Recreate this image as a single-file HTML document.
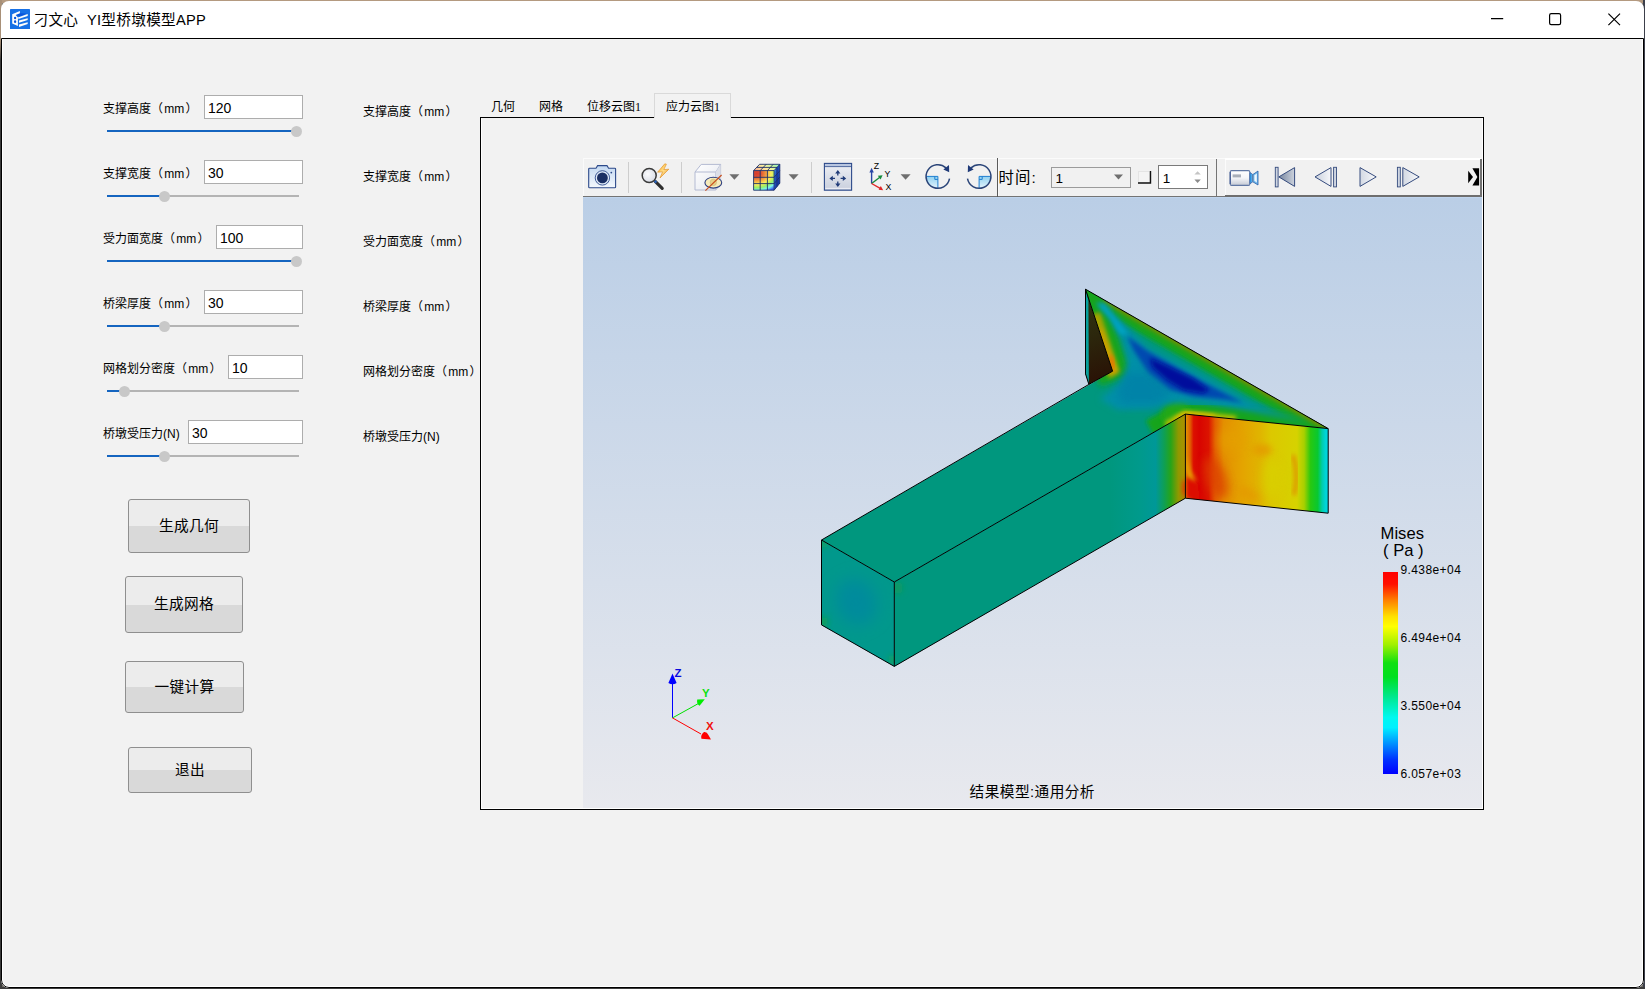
<!DOCTYPE html>
<html lang="zh-CN">
<head>
<meta charset="utf-8">
<title>YI型桥墩模型APP</title>
<style>
html,body{margin:0;padding:0;}
body{width:1645px;height:989px;overflow:hidden;position:relative;background:#6e6a64;font-family:"Liberation Sans","Noto Sans CJK SC",sans-serif;color:#000;}
.abs{position:absolute;}
#desk-top{left:0;top:0;width:1645px;height:3px;background:#b49a80;}
#desk-left{left:0;top:0;width:2px;height:989px;background:linear-gradient(#a89078 0,#a89078 40px,#3a3a3a 60px,#3a3a3a 100%);}
#desk-right{left:1643px;top:0;width:2px;height:989px;background:#3c3f4a;}
#desk-bottom{left:0;top:987px;width:1645px;height:2px;background:#3c3c3c;}
#win{left:1px;top:1px;width:1643px;height:987px;background:#fff;border-radius:8px;overflow:hidden;}
#client{left:0;top:37px;width:1641px;height:948px;border:1px solid #000;background:#f2f2f2;box-shadow:inset 1px 0 0 #fff, inset -1px -1px 0 #fff;border-radius:0 0 8px 8px;}
#title{left:32.5px;top:9px;font-size:14.67px;line-height:20px;white-space:pre;letter-spacing:0.27px;}
.lbl{font-size:12px;line-height:18px;white-space:nowrap;color:#000;}
.inp{background:#fff;border:1px solid #adadad;box-sizing:border-box;height:24px;font-size:14px;line-height:24px;padding-left:3px;}
.lbl i{font-style:normal;margin:0 1.1px 0 1.3px;}
.trk{height:2px;background:#b4b4b4;}
.trk b{display:block;height:2px;background:#1565c0;}
.knob{width:11px;height:11px;border-radius:50%;background:#c8c8c8;}
.btn{box-sizing:border-box;border:1px solid #8f8f8f;border-radius:3px;background:linear-gradient(#ececec 0,#ececec 50%,#d9d9d9 50%,#d9d9d9 100%);font-size:14.67px;text-align:center;letter-spacing:0.3px;}
.sf{font-family:"Liberation Serif",serif;}
.tab{font-size:12px;line-height:16px;white-space:nowrap;}
</style>
</head>
<body>
<div class="abs" id="desk-top"></div><div class="abs" id="desk-left"></div><div class="abs" id="desk-right"></div><div class="abs" id="desk-bottom"></div>
<div class="abs" id="win">
<!-- TITLEBAR -->
<div class="abs" id="title">刁文心  YI型桥墩模型APP</div>
<svg class="abs" style="left:9px;top:8px" width="20" height="20" viewBox="10 9 20 20"><rect x="10" y="9" width="20" height="20" rx="0.6" fill="#1771e6"/>
<path d="M15.3 14.9 L19.9 13.2 L26.9 13.6 L20.2 16.4 Z" fill="#0a55dc"/>
<path d="M12.2 14.3 L19.9 11.1 L19.9 13.2 L15.6 14.9 L17.9 17.4 L27.7 13.9 L27.7 16.1 L19.2 18.8 L17.9 18.6 L17.9 25.9 L12.2 23.4 Z" fill="#fdfdfb"/>
<path d="M19 20.5 L27.7 18.2 L27.7 20.1 L19 22.8 Z M19 24.5 L27.7 22.2 L27.7 24.1 L19 26.9 Z" fill="#fdfdfb"/>
<ellipse cx="15.1" cy="17.9" rx="1.15" ry="1.25" fill="#0a55dc"/><ellipse cx="15.1" cy="21.7" rx="1.15" ry="1.35" fill="#0a55dc"/>
</svg>
<svg class="abs" style="left:1480px;top:5px" width="150" height="28" viewBox="0 0 150 28" fill="none" stroke="#000" stroke-width="1.2"><path d="M10 12.7 H22.2"/><rect x="68.6" y="7.6" width="11" height="11" rx="1.6"/><path d="M127.4 7.6 L139 19.2 M139 7.6 L127.4 19.2"/></svg>
<div class="abs" id="client"></div>
</div>
<!--LEFT-->
<div class="abs lbl" style="left:103px;top:100px">支撑高度（<i>mm</i>）</div>
<div class="abs inp" style="left:204px;top:95px;width:99px">120</div>
<div class="abs trk" style="left:107px;top:130px;width:192px"><b style="width:189px"></b></div>
<div class="abs knob" style="left:291px;top:126px"></div>
<div class="abs lbl" style="left:363px;top:103px">支撑高度（<i>mm</i>）</div>
<div class="abs lbl" style="left:103px;top:165px">支撑宽度（<i>mm</i>）</div>
<div class="abs inp" style="left:204px;top:160px;width:99px">30</div>
<div class="abs trk" style="left:107px;top:195px;width:192px"><b style="width:57px"></b></div>
<div class="abs knob" style="left:159px;top:191px"></div>
<div class="abs lbl" style="left:363px;top:168px">支撑宽度（<i>mm</i>）</div>
<div class="abs lbl" style="left:103px;top:230px">受力面宽度（<i>mm</i>）</div>
<div class="abs inp" style="left:216px;top:225px;width:87px">100</div>
<div class="abs trk" style="left:107px;top:260px;width:192px"><b style="width:189px"></b></div>
<div class="abs knob" style="left:291px;top:256px"></div>
<div class="abs lbl" style="left:363px;top:233px">受力面宽度（<i>mm</i>）</div>
<div class="abs lbl" style="left:103px;top:295px">桥梁厚度（<i>mm</i>）</div>
<div class="abs inp" style="left:204px;top:290px;width:99px">30</div>
<div class="abs trk" style="left:107px;top:325px;width:192px"><b style="width:57px"></b></div>
<div class="abs knob" style="left:159px;top:321px"></div>
<div class="abs lbl" style="left:363px;top:298px">桥梁厚度（<i>mm</i>）</div>
<div class="abs lbl" style="left:103px;top:360px">网格划分密度（<i>mm</i>）</div>
<div class="abs inp" style="left:228px;top:355px;width:75px">10</div>
<div class="abs trk" style="left:107px;top:390px;width:192px"><b style="width:17px"></b></div>
<div class="abs knob" style="left:119px;top:386px"></div>
<div class="abs lbl" style="left:363px;top:363px">网格划分密度（<i>mm</i>）</div>
<div class="abs lbl" style="left:103px;top:425px">桥墩受压力(N)</div>
<div class="abs inp" style="left:188px;top:420px;width:115px">30</div>
<div class="abs trk" style="left:107px;top:455px;width:192px"><b style="width:57px"></b></div>
<div class="abs knob" style="left:159px;top:451px"></div>
<div class="abs lbl" style="left:363px;top:428px">桥墩受压力(N)</div>
<div class="abs btn" style="left:128px;top:499px;width:122px;height:54px;line-height:52px">生成几何</div>
<div class="abs btn" style="left:125px;top:576px;width:118px;height:57px;line-height:55px">生成网格</div>
<div class="abs btn" style="left:125px;top:661px;width:119px;height:52px;line-height:50px">一键计算</div>
<div class="abs btn" style="left:128px;top:747px;width:124px;height:46px;line-height:44px">退出</div>
<div class="abs" style="left:654px;top:93px;width:77px;height:25px;box-sizing:border-box;border:1px solid #d9d9d9;border-bottom:none;background:#f2f2f2;z-index:3"></div>
<div class="abs tab" style="left:491px;top:99px;z-index:4">几何</div>
<div class="abs tab" style="left:539px;top:99px;z-index:4">网格</div>
<div class="abs tab" style="left:587px;top:99px;z-index:4">位移云图<span class="sf">1</span></div>
<div class="abs tab" style="left:666px;top:99px;z-index:4">应力云图<span class="sf">1</span></div>
<div class="abs" id="pane" style="left:480px;top:117px;width:1002px;height:691px;border:1px solid #000;box-shadow:inset 1px 0 0 #fff,inset 0 -1px 0 #fff,inset -1px 0 0 #fff;background:#f2f2f2;z-index:2"></div>
<svg class="abs" id="tb" style="left:583px;top:157px;z-index:5" width="900" height="40" viewBox="583 157 900 40" font-family="'Liberation Sans','Noto Sans CJK SC',sans-serif">
<defs>
<linearGradient id="gCam" x1="0" y1="0" x2="0" y2="1"><stop offset="0" stop-color="#c3d8f1"/><stop offset="1" stop-color="#f4f8fd"/></linearGradient>
<radialGradient id="gLens" cx="0.4" cy="0.4" r="0.7"><stop offset="0" stop-color="#fafbfd"/><stop offset="1" stop-color="#d6dae4"/></radialGradient>
<linearGradient id="gBolt" x1="0" y1="0" x2="1" y2="1"><stop offset="0" stop-color="#f7a21a"/><stop offset="0.5" stop-color="#ffe08a"/><stop offset="1" stop-color="#e07a10"/></linearGradient>
<linearGradient id="gCube" x1="0" y1="0" x2="1" y2="1"><stop offset="0" stop-color="#ffffff"/><stop offset="1" stop-color="#e2e5ee"/></linearGradient>
<linearGradient id="gFit" x1="0" y1="0" x2="0" y2="1"><stop offset="0" stop-color="#eef0f5"/><stop offset="1" stop-color="#c9cfdd"/></linearGradient>
<linearGradient id="gQ" x1="0" y1="0" x2="0" y2="1"><stop offset="0" stop-color="#8fd0f0"/><stop offset="1" stop-color="#e4f4fc"/></linearGradient>
<linearGradient id="gVid" x1="0" y1="0" x2="0" y2="1"><stop offset="0" stop-color="#ffffff"/><stop offset="0.5" stop-color="#f4f5f8"/><stop offset="1" stop-color="#c4c9d4"/></linearGradient>
<linearGradient id="gTriD" x1="0" y1="0" x2="1" y2="0"><stop offset="0" stop-color="#76859f"/><stop offset="1" stop-color="#cdd3dd"/></linearGradient>
<linearGradient id="gTriL" x1="0" y1="0" x2="1" y2="0"><stop offset="0" stop-color="#c9d0dc"/><stop offset="1" stop-color="#f6f7fa"/></linearGradient>
<linearGradient id="gTriR" x1="0" y1="0" x2="1" y2="0"><stop offset="0" stop-color="#d3d9e3"/><stop offset="1" stop-color="#f8f9fb"/></linearGradient>
<radialGradient id="rbF" gradientUnits="userSpaceOnUse" cx="756.5" cy="173.5" r="21.5" gradientTransform="translate(756.5 173.5) scale(1.35 1) translate(-756.5 -173.5)"><stop offset="0" stop-color="#d63c30"/><stop offset="0.14" stop-color="#dc4a32"/><stop offset="0.34" stop-color="#f4a040"/><stop offset="0.5" stop-color="#fcec5c"/><stop offset="0.66" stop-color="#98f068"/><stop offset="0.78" stop-color="#78f4ec"/><stop offset="0.9" stop-color="#3c64f4"/><stop offset="1" stop-color="#2848e0"/></radialGradient>
<linearGradient id="rbT" x1="0" y1="0.6" x2="1" y2="0.2"><stop offset="0" stop-color="#f8b890"/><stop offset="0.45" stop-color="#fcf0a0"/><stop offset="0.75" stop-color="#c8f8a0"/><stop offset="1" stop-color="#90f0c0"/></linearGradient>
<linearGradient id="rbS" x1="0" y1="0" x2="1" y2="1"><stop offset="0" stop-color="#48c8e8"/><stop offset="0.35" stop-color="#2050c8"/><stop offset="1" stop-color="#0c2890"/></linearGradient>
</defs>
<!-- bg -->
<rect x="583" y="158" width="898" height="38" fill="#f1f1f1"/><rect x="583" y="158" width="1" height="38" fill="#fafafa"/>
<rect x="584" y="158" width="641" height="1" fill="#fbfbfb"/>
<rect x="1225" y="158" width="256" height="2" fill="#ffffff"/>
<rect x="583" y="196" width="634" height="1" fill="#747474"/>
<rect x="1217" y="196" width="8" height="1" fill="#747474"/><rect x="1225" y="160" width="1" height="35" fill="#fbfbfb"/>
<rect x="1225" y="195" width="257" height="2" fill="#6e6e6e"/>
<rect x="1480" y="159" width="2" height="38" fill="#727272"/>

<!-- camera -->
<path d="M589.5 168.2 H596 L597.6 165.6 H607 L608.6 168.2 H614.8 Q615.6 168.2 615.6 169 V187 Q615.6 187.8 614.8 187.8 H589.5 Q588.7 187.8 588.7 187 V169 Q588.7 168.2 589.5 168.2 Z" fill="url(#gCam)" stroke="#2d4a8a" stroke-width="1.1"/>
<circle cx="602.4" cy="177.9" r="7.2" fill="#dfe9f7" stroke="#2d4a8a" stroke-width="0.9"/>
<circle cx="602.4" cy="177.9" r="5.4" fill="#1b2f63"/>
<circle cx="611.3" cy="172.6" r="0.9" fill="#2d4a8a"/>
<!-- separators -->
<rect x="628" y="162" width="1" height="31" fill="#cdcdcd"/>
<rect x="681" y="162" width="1" height="31" fill="#cdcdcd"/>
<rect x="811" y="162" width="1" height="31" fill="#cdcdcd"/>
<!-- magnifier -->
<path d="M655.2 181.4 L662.2 188.4" stroke="#2f2f2f" stroke-width="3.2" stroke-linecap="round"/>
<path d="M654.2 180.4 L656.4 182.6" stroke="#2a62b8" stroke-width="2.2"/>
<circle cx="649.2" cy="175.5" r="7" fill="url(#gLens)" stroke="#3a3a3a" stroke-width="1.5"/>
<path d="M664.8 163.8 L657.6 172.2 L662.6 171.8 L660 178 L668.8 169.2 L663.8 169.6 L666.4 164.2 Z" fill="url(#gBolt)" stroke="#e08a18" stroke-width="0.6"/>
<!-- cube + eye -->
<path d="M695 172 L701.2 164.4 H720.6 V184.2 L715.8 190 H695 Z" fill="url(#gCube)" stroke="#b3bad2" stroke-width="1"/>
<path d="M695 172 H715.8 V190 M715.8 172 L720.6 164.4" fill="none" stroke="#b3bad2" stroke-width="1"/>
<path d="M715.8 172 L720.6 164.4 V184.2 L715.8 190 Z" fill="#dcdfe8"/>
<ellipse cx="713.3" cy="182.7" rx="8.4" ry="5.4" fill="#f6ebbb" stroke="#2d3f80" stroke-width="1.1"/>
<circle cx="713.3" cy="182.4" r="3.2" fill="#e8d38a" stroke="#c9b878" stroke-width="0.6"/>
<path d="M705.4 190.6 L721.6 175" stroke="#c8501e" stroke-width="1.2"/>
<!-- dropdown arrows -->
<path d="M729.4 174.2 H739.4 L734.4 179.8 Z" fill="#6f6f6f"/>
<path d="M788.6 174.2 H798.6 L793.6 179.8 Z" fill="#6f6f6f"/>
<path d="M900.6 174.2 H910.6 L905.6 179.8 Z" fill="#6f6f6f"/>
<!-- rainbow cube -->
<path d="M753.6 170.6 L759.6 164.3 H779.8 L774.1 170.6 Z" fill="url(#rbT)"/>
<path d="M774.1 170.6 L779.8 164.3 V183.2 L774.1 190.2 Z" fill="url(#rbS)"/>
<rect x="753.6" y="170.6" width="20.5" height="19.6" fill="url(#rbF)"/>
<path d="M753.6 170.6 H774.1 V190.2 H753.6 Z M753.6 170.6 L759.6 164.3 H779.8 V183.2 L774.1 190.2 M774.1 170.6 L779.8 164.3 M760.2 170.6 V190.2 M767.4 170.6 V190.2 M753.6 177.3 H774.1 M753.6 183.6 H774.1 M760.2 170.6 L766.2 164.3 M767.4 170.6 L773.2 164.3 M756.6 167.4 H777 M777 167.4 V186.6 M774.1 177.3 L779.8 170.8 M774.1 183.6 L779.8 177" fill="none" stroke="#1c2f6a" stroke-width="0.9"/>
<!-- fit view -->
<rect x="824.4" y="163.4" width="27.2" height="26.8" fill="url(#gFit)" stroke="#2d4a8a" stroke-width="1.1"/>
<rect x="825" y="164" width="26" height="2.4" fill="#b9c6e0"/>
<path d="M824.4 166.6 H851.6" stroke="#2d4a8a" stroke-width="0.8"/>
<path d="M825.4 188.4 H850.6" stroke="#eef0f6" stroke-width="1"/>
<g stroke="#1f3a78" stroke-width="1.3" fill="#1f3a78">
<path d="M837.8 171.5 V175.6 M837.8 181.4 V185.5 M831 178.4 H835 M840.6 178.4 H844.8" fill="none"/>
<path d="M837.8 170 L840.4 173.4 H835.2 Z M837.8 187 L840.4 183.6 H835.2 Z M829.4 178.4 L832.8 175.8 V181 Z M846.2 178.4 L842.8 175.8 V181 Z" stroke="none"/>
</g>
<!-- axes icon -->
<path d="M871.6 183.5 V170.5" stroke="#2845a5" stroke-width="1.4"/><path d="M871.6 167.8 L873.8 172.4 H869.4 Z" fill="#2845a5"/>
<path d="M871.6 183.5 L880.2 177" stroke="#168a3c" stroke-width="1.4"/><path d="M882.6 175.2 L880.6 179.4 L877.8 175.8 Z" fill="#168a3c"/>
<path d="M871.6 183.5 L880.6 188.6" stroke="#e02828" stroke-width="1.4"/><path d="M883.2 190.2 L878.6 189.8 L880.8 186 Z" fill="#e02828"/>
<text x="873.8" y="169.4" font-size="8.8" fill="#000">Z</text>
<text x="884.6" y="177.4" font-size="8.8" fill="#000">Y</text>
<text x="885.4" y="189.8" font-size="8.8" fill="#000">X</text>
<!-- rotate cw -->
<path d="M926.2 176.4 H937.9 V188.2 A11.8 11.8 0 0 1 926.2 176.4 Z" fill="url(#gQ)"/>
<path d="M926.2 176.4 H937.9 V188.2 M934.8 176.4 V179.4 H937.9" fill="none" stroke="#1f7fd0" stroke-width="1"/>
<path d="M949.5 178.6 A11.8 11.8 0 1 1 946 167.9" fill="none" stroke="#2a4478" stroke-width="1.5"/>
<path d="M943.4 169.6 L949 165 L949.2 172.2 Z" fill="#1f3a78"/>
<!-- rotate ccw -->
<path d="M990.8 176.4 H979.1 V188.2 A11.8 11.8 0 0 0 990.8 176.4 Z" fill="url(#gQ)"/>
<path d="M990.8 176.4 H979.1 V188.2 M982.2 176.4 V179.4 H979.1" fill="none" stroke="#1f7fd0" stroke-width="1"/>
<path d="M967.5 178.6 A11.8 11.8 0 1 0 971 167.9" fill="none" stroke="#2a4478" stroke-width="1.5"/>
<path d="M973.6 169.6 L968 165 L967.8 172.2 Z" fill="#1f3a78"/>
<!-- divider -->
<rect x="997" y="158" width="1" height="39" fill="#5a5a5a"/>
<rect x="998" y="158" width="1" height="38" fill="#fafafa"/>
<text x="998.6" y="183" font-size="15.4" fill="#000" letter-spacing="1">时间:</text>
<!-- combobox -->
<rect x="1051.5" y="167.5" width="79" height="20" fill="#f1f1f1" stroke="#9b9b9b" stroke-width="1"/>
<text x="1055.6" y="182.9" font-size="13.5" fill="#000">1</text>
<path d="M1114 174.6 H1123 L1118.5 179.6 Z" fill="#6f6f6f"/>
<!-- small raised square -->
<rect x="1138.5" y="171.5" width="11" height="11" fill="#f4f4f4" stroke="#e4e4e4" stroke-width="1"/>
<path d="M1138 183 H1150.5 V171" fill="none" stroke="#111" stroke-width="1.4"/>
<!-- spinbox -->
<rect x="1158.5" y="165.5" width="49" height="23" fill="#fff" stroke="#7a7a7a" stroke-width="1"/>
<text x="1162.8" y="182.9" font-size="13.5" fill="#000">1</text>
<path d="M1194.4 174.6 L1197.6 171.2 L1200.8 174.6 Z" fill="#c4c4c4"/>
<path d="M1194.4 179.4 L1197.6 182.9 L1200.8 179.4 Z" fill="#8a8a8a"/>
<!-- divider 2 -->
<rect x="1216" y="159" width="1" height="38" fill="#747474"/>
<!-- video camera -->
<rect x="1230.2" y="170.6" width="19.6" height="14.8" rx="1.4" fill="url(#gVid)" stroke="#6178a4" stroke-width="1.1"/>
<path d="M1230.2 172 V184" stroke="#3c5690" stroke-width="1.1"/>
<rect x="1232.6" y="174.4" width="8.4" height="3" fill="#a9afb9"/>
<path d="M1250 172.6 L1252.8 174.6 L1258 171 V185 L1252.8 181.8 L1250 183.6 Z" fill="#6fb8ec" stroke="#2a5ea8" stroke-width="0.8"/>
<path d="M1250.8 174.2 V182" stroke="#2390e0" stroke-width="1.2"/>
<path d="M1252.8 175 V181.4" stroke="#5b6f98" stroke-width="1.1"/>
<path d="M1254.4 175.2 L1256.8 173.6 V182.4 L1254.4 180.8 Z" fill="#f2f9ff"/>
<!-- first -->
<rect x="1275.3" y="167.3" width="2.8" height="19.6" fill="#cfd6e2" stroke="#364c7e" stroke-width="0.9"/>
<path d="M1278.8 176.9 L1294.6 167.6 V186.4 Z" fill="url(#gTriD)" stroke="#364c7e" stroke-width="1"/>
<!-- prev -->
<path d="M1315 176.9 L1331 167.6 V186.4 Z" fill="url(#gTriL)" stroke="#364c7e" stroke-width="1"/>
<rect x="1333.6" y="167.3" width="2.9" height="19.6" fill="#cfd6e2" stroke="#364c7e" stroke-width="0.9"/>
<!-- play -->
<path d="M1376.2 176.9 L1360 167.6 V186.4 Z" fill="url(#gTriR)" stroke="#364c7e" stroke-width="1"/>
<!-- next -->
<rect x="1397.4" y="167.3" width="2.9" height="19.6" fill="#cfd6e2" stroke="#364c7e" stroke-width="0.9"/>
<path d="M1419.2 176.9 L1402.8 167.6 V186.4 Z" fill="url(#gTriR)" stroke="#364c7e" stroke-width="1"/>
<!-- extension -->
<path d="M1468.2 170.8 L1473 177 L1468.2 183.2 Z" fill="#000"/>
<path d="M1472.4 168.2 H1479.1 V185.6 H1472.4 L1477.4 177 Z" fill="#000"/>
</svg>
<div class="abs" id="vp" style="left:583px;top:197px;width:899px;height:611px;background:linear-gradient(#c0d5ee 0,#c0d5ee 1px,#bacee6 1px,#e8e9ee 100%);z-index:5;overflow:hidden">
<svg class="abs" style="left:0;top:0" width="899" height="611" viewBox="583 197 899 611" font-family="'Liberation Sans','Noto Sans CJK SC',sans-serif">
<defs>
<filter id="b2" x="-50%" y="-50%" width="200%" height="200%"><feGaussianBlur stdDeviation="2"/></filter>
<filter id="b3" x="-50%" y="-50%" width="200%" height="200%"><feGaussianBlur stdDeviation="3"/></filter>
<filter id="b5" x="-50%" y="-50%" width="200%" height="200%"><feGaussianBlur stdDeviation="5"/></filter>
<filter id="b8" x="-50%" y="-50%" width="200%" height="200%"><feGaussianBlur stdDeviation="8"/></filter>
<clipPath id="cTop"><path d="M821.5 540 L894.3 582 L1185.4 414.1 L1328.2 428.6 L1085.5 289.2 L1112.6 371.2 Z"/></clipPath>
<clipPath id="cSide"><path d="M894.3 582 L894.3 666.4 L1185.4 498.2 L1185.4 414.1 Z"/></clipPath>
<clipPath id="cFront"><path d="M821.5 540 L821.5 624.9 L894.3 666.4 L894.3 582 Z"/></clipPath>
<clipPath id="cRed"><path d="M1185.4 414.1 L1328.2 428.6 L1328.2 513.2 L1185.4 498.2 Z"/></clipPath>
<linearGradient id="gRed" gradientUnits="userSpaceOnUse" x1="1185" y1="0" x2="1328.5" y2="0">
<stop offset="0" stop-color="#e0a000"/><stop offset="0.035" stop-color="#e06000"/><stop offset="0.06" stop-color="#dc1000"/><stop offset="0.1" stop-color="#d80400"/><stop offset="0.165" stop-color="#dc1400"/><stop offset="0.21" stop-color="#e46000"/><stop offset="0.27" stop-color="#e49000"/><stop offset="0.4" stop-color="#e4a400"/><stop offset="0.52" stop-color="#e0b400"/><stop offset="0.6" stop-color="#dcc800"/><stop offset="0.78" stop-color="#d6d200"/><stop offset="0.83" stop-color="#a8d000"/><stop offset="0.875" stop-color="#28c810"/><stop offset="0.925" stop-color="#08c830"/><stop offset="0.955" stop-color="#00ccaa"/><stop offset="0.98" stop-color="#00d4d8"/><stop offset="1" stop-color="#00d8e0"/></linearGradient>
<linearGradient id="gSide" gradientUnits="userSpaceOnUse" x1="1110" y1="0" x2="1186" y2="0">
<stop offset="0" stop-color="#00977e"/><stop offset="0.4" stop-color="#009a8c"/><stop offset="0.6" stop-color="#009898"/><stop offset="0.72" stop-color="#10a050"/><stop offset="0.8" stop-color="#28a418"/><stop offset="0.9" stop-color="#909800"/><stop offset="1" stop-color="#b09000"/></linearGradient>
<linearGradient id="gDark" gradientUnits="userSpaceOnUse" x1="1086" y1="300" x2="1112" y2="372"><stop offset="0" stop-color="#303410"/><stop offset="0.5" stop-color="#2c260c"/><stop offset="1" stop-color="#2a1406"/></linearGradient>
</defs>
<!--MODEL-->
<g stroke-linejoin="round">
<!-- front -->
<path d="M821.5 540 L821.5 624.9 L894.3 666.4 L894.3 582 Z" fill="#01988c"/>
<g clip-path="url(#cFront)"><ellipse cx="856" cy="602" rx="20" ry="24" fill="#008b9c" filter="url(#b8)" transform="rotate(-25 856 602)"/>
<circle cx="823" cy="622" r="5" fill="#10a050" filter="url(#b3)"/><circle cx="823" cy="543" r="5" fill="#10a060" filter="url(#b3)"/><circle cx="893" cy="660" r="5" fill="#10a060" filter="url(#b3)"/></g>
<!-- side -->
<path d="M894.3 582 L894.3 666.4 L1185.4 498.2 L1185.4 414.1 Z" fill="url(#gSide)"/>
<g clip-path="url(#cSide)"><circle cx="897" cy="588" r="6" fill="#109a60" filter="url(#b3)"/><ellipse cx="1185" cy="488" rx="3" ry="9" fill="#d84000" filter="url(#b2)"/></g>
<!-- top -->
<path d="M821.5 540 L894.3 582 L1185.4 414.1 L1328.2 428.6 L1085.5 289.2 L1112.6 371.2 Z" fill="#00977e"/>
<g clip-path="url(#cTop)">
<!-- green/yellow halo region -->
<!-- green halos along edges -->
<path d="M1085.5 289.2 L1328.2 428.6" stroke="#12a41a" stroke-width="22" filter="url(#b2)" fill="none"/>
<path d="M1087 292 L1112.6 371.2 L1116 380" stroke="#12a41a" stroke-width="34" filter="url(#b3)" fill="none"/>
<path d="M1152 432 L1185.4 414.1 L1328.2 428.6" stroke="#12a41a" stroke-width="26" filter="url(#b2)" fill="none"/>
<circle cx="1176" cy="414" r="14" fill="#20a818" filter="url(#b3)"/>
<!-- olive / yellow closer to the edges -->
<path d="M1104 299.8 L1328.2 428.6" stroke="#7c8c00" stroke-width="5" filter="url(#b2)" fill="none"/>
<path d="M1094 314 L1112.6 371.2 L1115 375" stroke="#a8a400" stroke-width="13" filter="url(#b2)" fill="none"/>
<path d="M1098 330 L1112.6 369 L1114 373" stroke="#d0a000" stroke-width="7" filter="url(#b2)" fill="none"/>
<path d="M1110.5 356 L1113.4 369" stroke="#f06800" stroke-width="3.5" filter="url(#b2)" fill="none"/>
<path d="M1166 425.2 L1185.4 414.1 L1236 419.2" stroke="#b8c000" stroke-width="7" filter="url(#b2)" fill="none"/>
<path d="M1176 419.4 L1185.4 414.1 L1215 417.1" stroke="#e0b800" stroke-width="4" filter="url(#b2)" fill="none"/>
<!-- cyan/teal-blue outer -->
<path d="M1096.2 302.7 L1105 304.5 L1121 322 L1148 348 L1180 364 L1212 381 L1250 403 L1310 423.5 L1250 411 L1196 401 L1166 404 L1150 409 L1118 410 L1100 399 L1124 381 L1128 360 L1122 340 L1110 318 Z" fill="#0090a8" filter="url(#b3)"/>
<path d="M1096.2 302.7 L1104.3 304.3 L1118.8 322 L1128.5 335 L1120 334 L1110 318 Z" fill="#00a4c4" filter="url(#b2)"/>
<path d="M1126 372 L1150 372 L1172 392 L1158 404 L1124 404 L1116 396 Z" fill="#0082a8" filter="url(#b5)" opacity="0.9"/>
<!-- medium blue -->
<path d="M1126.9 335.8 L1148 351.2 L1177 367.4 L1209.4 385.2 L1243.4 403 L1225.6 399.7 L1193.3 396.5 L1170.6 390 L1148 372 L1133.4 350 Z" fill="#0048b0" filter="url(#b2)"/>
<!-- deep blue -->
<path d="M1149.6 357.7 L1170.6 367.4 L1193.3 378.7 L1209.4 390 L1203 393.3 L1183.6 390 L1167.4 380.3 L1152.8 367.4 Z" fill="#000c9c" filter="url(#b2)"/>
</g>
<!-- red face -->
<path d="M1185.4 414.1 L1328.2 428.6 L1328.2 513.2 L1185.4 498.2 Z" fill="url(#gRed)"/>
<g clip-path="url(#cRed)">
<path d="M1186 470 L1198 484 L1200 500 L1186 499 Z" fill="#dc0800" filter="url(#b2)"/>
<path d="M1186 455 L1190 470 L1197 482 L1186 476 Z" fill="#e8a800" filter="url(#b2)"/>
<ellipse cx="1216" cy="478" rx="10" ry="22" fill="#dc4000" filter="url(#b5)" opacity="0.75" transform="rotate(-20 1216 478)"/>
<path d="M1293 455 Q1299 475 1294 495" stroke="#e08c00" stroke-width="4" fill="none" filter="url(#b2)" opacity="0.9"/>
<ellipse cx="1262" cy="450" rx="10" ry="6" fill="#e49a00" filter="url(#b3)" opacity="0.8"/>
<ellipse cx="1248" cy="494" rx="12" ry="6" fill="#e49800" filter="url(#b3)" opacity="0.7" transform="rotate(30 1248 494)"/>
<ellipse cx="1272" cy="478" rx="10" ry="18" fill="#d8d000" filter="url(#b5)" opacity="0.7"/>
<ellipse cx="1232" cy="440" rx="14" ry="12" fill="#e4a000" filter="url(#b5)" opacity="0.6"/>
</g>
<!-- dark sliver -->
<path d="M1085.5 289.2 L1085.5 373.9 L1088.9 384.4 L1112.6 371.2 Z" fill="url(#gDark)"/>
<path d="M1085.5 289.2 L1085.5 373.9 L1088.9 384.4 L1088.4 300 Z" fill="#08a09c"/>
<!-- edges -->
<g fill="none" stroke="#000" stroke-width="1">
<path d="M821.5 540 L821.5 624.9 L894.3 666.4 L894.3 582 Z"/>
<path d="M894.3 582 L1185.4 414.1 L1185.4 498.2 L894.3 666.4"/>
<path d="M821.5 540 L1088.9 384.4"/>
<path d="M1085.5 289.2 L1085.5 373.9 L1088.9 384.4 L1112.6 371.2 Z"/>
<path d="M1085.5 289.2 L1328.2 428.6 L1328.2 513.2 L1185.4 498.2"/>
<path d="M1185.4 414.1 L1328.2 428.6"/>
</g>
</g>
<g>
<path d="M672.5 717.9 V683" stroke="#0000ff" stroke-width="1"/><path d="M672.5 673.6 L676.6 683 Q672.5 685.4 668.4 683 Z" fill="#0000ff"/>
<path d="M672.5 717.9 L699 703.2" stroke="#00e000" stroke-width="1"/><path d="M704.8 699.2 L699.6 705.8 Q696.4 703.6 697.2 699.4 Z" fill="#00ee00"/>
<path d="M672.5 717.9 L701 734" stroke="#ff0000" stroke-width="1"/><path d="M711 739.4 L701.4 738.8 Q700.4 734.6 704 732 Q707 731.6 708.4 735 Z" fill="#ff0000"/>
<text x="674.6" y="676.9" font-size="11.5" font-weight="bold" fill="#0a0adc">Z</text>
<text x="702" y="696.9" font-size="11.5" font-weight="bold" fill="#10e010">Y</text>
<text x="706" y="730" font-size="11.5" font-weight="bold" fill="#f01010">X</text>
</g>
<defs><linearGradient id="gBar" x1="0" y1="0" x2="0" y2="1">
<stop offset="0" stop-color="#ff0000"/><stop offset="0.06" stop-color="#ff1000"/><stop offset="0.14" stop-color="#ff8000"/><stop offset="0.22" stop-color="#ffe000"/><stop offset="0.27" stop-color="#ffff00"/><stop offset="0.36" stop-color="#a0f000"/><stop offset="0.45" stop-color="#10e010"/><stop offset="0.52" stop-color="#00e020"/><stop offset="0.62" stop-color="#00e890"/><stop offset="0.72" stop-color="#00f8f0"/><stop offset="0.77" stop-color="#00f0ff"/><stop offset="0.85" stop-color="#0090ff"/><stop offset="0.93" stop-color="#0030ff"/><stop offset="1" stop-color="#0000ff"/></linearGradient></defs>
<rect x="1383" y="572" width="15" height="202" fill="url(#gBar)"/>
<text x="1380.6" y="538.8" font-size="16.6" fill="#000">Mises</text>
<text x="1383" y="555.6" font-size="16.6" fill="#000" xml:space="preserve">( Pa )</text>
<g font-size="12" fill="#000" letter-spacing="0.42">
<text x="1400.4" y="574">9.438e+04</text>
<text x="1400.4" y="642">6.494e+04</text>
<text x="1400.4" y="710">3.550e+04</text>
<text x="1400.4" y="778">6.057e+03</text>
</g>
<text x="969.6" y="797.2" font-size="14.67" fill="#000" letter-spacing="0.45">结果模型:通用分析</text>
</svg>
</div>
</body>
</html>
